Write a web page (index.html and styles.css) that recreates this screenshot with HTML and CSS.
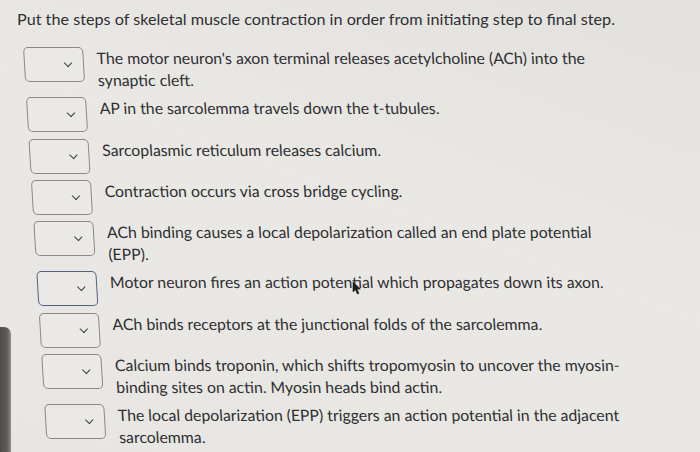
FILE: index.html
```html
<!DOCTYPE html>
<html lang="en">

<head>
  <meta charset="UTF-8">
  <meta name="viewport" content="width=device-width, initial-scale=1.0">
  <title>Skeletal Muscle Contraction</title>

  <!-- styles -->
  <link rel="stylesheet" href="styles.css">
</head>

<body>
  <div class="question">
    <p class="prompt">Put the steps of skeletal muscle contraction in order from initiating step to final step.</p>

    <ul class="steps">
      <li class="step">
        <div class="select"><span class="chevron"></span></div>
        <p class="answer">The motor neuron's axon terminal releases acetylcholine (ACh) into the synaptic cleft.</p>
      </li>
      <li class="step">
        <div class="select"><span class="chevron"></span></div>
        <p class="answer">AP in the sarcolemma travels down the t-tubules.</p>
      </li>
      <li class="step">
        <div class="select"><span class="chevron"></span></div>
        <p class="answer">Sarcoplasmic reticulum releases calcium.</p>
      </li>
      <li class="step">
        <div class="select"><span class="chevron"></span></div>
        <p class="answer">Contraction occurs via cross bridge cycling.</p>
      </li>
      <li class="step">
        <div class="select"><span class="chevron"></span></div>
        <p class="answer">ACh binding causes a local depolarization called an end plate potential (EPP).</p>
      </li>
      <li class="step">
        <div class="select focused"><span class="chevron"></span></div>
        <p class="answer">Motor neuron fires an action potential which propagates down its axon.</p>
      </li>
      <li class="step">
        <div class="select"><span class="chevron"></span></div>
        <p class="answer">ACh binds receptors at the junctional folds of the sarcolemma.</p>
      </li>
      <li class="step">
        <div class="select"><span class="chevron"></span></div>
        <p class="answer">Calcium binds troponin, which shifts tropomyosin to uncover the myosin-binding sites on actin. Myosin heads bind actin.</p>
      </li>
      <li class="step">
        <div class="select"><span class="chevron"></span></div>
        <p class="answer">The local depolarization (EPP) triggers an action potential in the adjacent sarcolemma.</p>
      </li>
    </ul>
  </div>

  <!-- mouse pointer -->
  <svg class="pointer" width="10" height="14" viewBox="0 0 10 14">
    <path d="M1 1 L1 11 L3.4 8.8 L5.4 13 L7 12.3 L5 8.2 L8.4 8 Z" fill="#1e1e1e" stroke="#1e1e1e" stroke-width="0.6" stroke-linejoin="round" />
  </svg>
</body>

</html>
```

FILE: styles.css
```css
* {
  margin: 0;
  padding: 0;
  box-sizing: border-box;
}

body {
  position: relative;
  width: 700px;
  height: 452px;
  overflow: hidden;
  font-family: "Lato", "Open Sans", sans-serif;
  color: #2e2f31;
  background: linear-gradient(200deg, #e3e1de 0%, #eae8e5 45%, #e8e6e2 100%);
}

/* dark edge at the lower left */
body::before {
  content: "";
  position: absolute;
  left: 0;
  top: 327px;
  width: 11px;
  height: 140px;
  border-radius: 0 7px 0 0;
  background: linear-gradient(90deg, #4d4c48 0%, #5f5e5a 65%, #8f8e89 100%);
}

.question {
  padding: 8px 0 0 17px;
}

.prompt {
  font-size: 16.2px;
  line-height: 22px;
}

.steps {
  list-style: none;
  display: flex;
  flex-direction: column;
  gap: 6.3px;
  margin: 17px 0 0 6px;
  transform: skewX(3.4deg);
  transform-origin: 0 0;
}

.step {
  display: flex;
  align-items: flex-start;
  gap: 13px;
}

.select {
  display: flex;
  align-items: center;
  justify-content: flex-end;
  flex-shrink: 0;
  width: 60px;
  height: 35px;
  padding-right: 12px;
  border: 1px solid #8a8985;
  border-radius: 5px;
  background-color: #ebe9e6;
}

.select.focused {
  border: 1.5px solid #56607e;
}

.chevron {
  width: 6px;
  height: 6px;
  margin-top: -3px;
  border-right: 1.6px solid #3a3d42;
  border-bottom: 1.6px solid #3a3d42;
  transform: rotate(45deg);
}

.answer {
  width: 506px;
  font-size: 15.8px;
  line-height: 22px;
}

.pointer {
  position: absolute;
  left: 352px;
  top: 281px;
}
```
